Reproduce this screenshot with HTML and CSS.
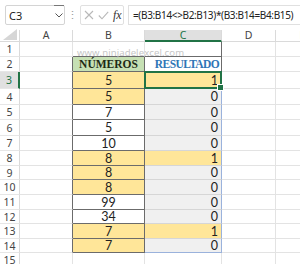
FILE: index.html
```html
<!DOCTYPE html>
<html>
<head>
<meta charset="utf-8">
<link rel="stylesheet" href="styles.css">
</head>
<body>
<div class="app">
  <div class="fbar">
    <div class="namebox"><span class="ref">C3</span><span class="dd"><svg width="8" height="5" viewBox="0 0 8 5"><path d="M0.5 0.5 L4 4 L7.5 0.5" fill="none" stroke="#555" stroke-width="1"/></svg></span></div>
    <div class="grip">⋮</div>
    <div class="fxbox">
      <svg width="10" height="10" viewBox="0 0 10 10"><path d="M1 1 L9 9 M9 1 L1 9" stroke="#b8b8b8" stroke-width="1.1" fill="none"/></svg>
      <svg width="11" height="9" viewBox="0 0 11 9"><path d="M0.8 4.5 L4 7.8 L10.2 0.8" stroke="#b8b8b8" stroke-width="1.1" fill="none"/></svg>
      <span class="fx">fx</span>
    </div>
    <div class="formula">=(B3:B14&lt;&gt;B2:B13)*(B3:B14=B4:B15)</div>
  </div>
  <div class="sheet">
    <div class="grid">
      <div class="corner"><svg width="14" height="11" viewBox="0 0 14 11"><path d="M14 0 L14 11 L0 11 Z" fill="#d6d6d6"/></svg></div>
      <div class="ch">A</div><div class="ch">B</div><div class="ch sel">C</div><div class="ch">D</div><div class="ch">E</div>

      <div class="rh">1</div><div class="c ab"></div><div class="c b1"></div><div class="c c1"></div><div class="c"></div><div class="c"></div>
      <div class="rh">2</div><div class="c a"></div><div class="c bn hd">NÚMEROS</div><div class="c cr hd">RESULTADO</div><div class="c"></div><div class="c"></div>
      <div class="rh sel">3</div><div class="c a"></div><div class="c bn y">5</div><div class="c cr y act">1</div><div class="c"></div><div class="c"></div>
      <div class="rh">4</div><div class="c a"></div><div class="c bn y">5</div><div class="c cr g">0</div><div class="c"></div><div class="c"></div>
      <div class="rh">5</div><div class="c a"></div><div class="c bn">7</div><div class="c cr g">0</div><div class="c"></div><div class="c"></div>
      <div class="rh">6</div><div class="c a"></div><div class="c bn">5</div><div class="c cr g">0</div><div class="c"></div><div class="c"></div>
      <div class="rh">7</div><div class="c a"></div><div class="c bn">10</div><div class="c cr g">0</div><div class="c"></div><div class="c"></div>
      <div class="rh">8</div><div class="c a"></div><div class="c bn y">8</div><div class="c cr y">1</div><div class="c"></div><div class="c"></div>
      <div class="rh">9</div><div class="c a"></div><div class="c bn y">8</div><div class="c cr g">0</div><div class="c"></div><div class="c"></div>
      <div class="rh">10</div><div class="c a"></div><div class="c bn y">8</div><div class="c cr g">0</div><div class="c"></div><div class="c"></div>
      <div class="rh">11</div><div class="c a"></div><div class="c bn">99</div><div class="c cr g">0</div><div class="c"></div><div class="c"></div>
      <div class="rh">12</div><div class="c a"></div><div class="c bn">34</div><div class="c cr g">0</div><div class="c"></div><div class="c"></div>
      <div class="rh">13</div><div class="c a"></div><div class="c bn y">7</div><div class="c cr y">1</div><div class="c"></div><div class="c"></div>
      <div class="rh">14</div><div class="c a"></div><div class="c bn y">7</div><div class="c cr g last">0</div><div class="c"></div><div class="c"></div>
      <div class="rh">15</div><div class="c"></div><div class="c"></div><div class="c"></div><div class="c"></div><div class="c"></div>
    </div>
    <div class="wm">www.ninjadelexcel.com</div>
  </div>
</div>
</body>
</html>
```
FILE: styles.css
```css
* { box-sizing: border-box; }
html, body { margin: 0; padding: 0; background: #fff; overflow: hidden; }
body { width: 300px; height: 264px; font-family: "Noto Sans", "Open Sans", sans-serif; }
.app { width: 300px; height: 264px; overflow: hidden; }

.fbar { height: 30px; display: flex; align-items: flex-start; padding: 5px 0 0 5px; white-space: nowrap; }
.namebox { flex: 0 0 60px; height: 20px; border: 1px solid #d4d4d4; border-radius: 2px; display: flex; align-items: center; justify-content: space-between; padding-left: 3px; }
.ref { font-size: 11px; color: #222; }
.dd { width: 10px; height: 19px; border-top: 1px solid #777; display: flex; align-items: center; justify-content: center; margin-top: -1px; }
.grip { flex: 0 0 15px; text-align: center; font-size: 11px; color: #999; line-height: 20px; }
.fxbox { flex: 0 0 44px; height: 20px; border: 1px solid #e0e0e0; border-radius: 2px; display: flex; align-items: center; gap: 4px; padding-left: 3px; }
.fx { font-family: "Liberation Serif", serif; font-style: italic; font-size: 12px; color: #333; }
.formula { margin-left: 4px; flex: 1 1 auto; min-width: 0; overflow: hidden; height: 20px; border: 1px solid #e0e0e0; border-right: none; padding-left: 4px; font-size: 10px; color: #222; line-height: 18px; letter-spacing: -0.35px; }

.sheet { position: relative; }
.grid { display: grid; grid-template-columns: 20px 53px 72px 77px 54px 54px; grid-template-rows: 12px 15px 15px 17px 16px 15px 16px 15px 15px 14px 15px 15px 14px 15px 14px 15px; }
.corner { display: flex; align-items: flex-end; justify-content: flex-end; padding: 0 2px 1px 0; border-right: 1px solid #dadada; border-bottom: 1px solid #dadada; }
.ch { font-size: 10.5px; color: #444; text-align: center; line-height: 11px; border-right: 1px solid #dadada; border-bottom: 1px solid #dadada; }
.ch.sel { background: #e0e0e0; color: #217346; border-bottom: 2px solid #217346; }
.rh { font-size: 10.5px; color: #444; text-align: center; display: flex; align-items: center; justify-content: center; border-right: 1px solid #dadada; border-bottom: 1px solid #e6e6e6; }
.rh.sel { background: #e0e0e0; color: #217346; border-right: 2px solid #217346; }

.c { border-right: 1px solid #e3e3e3; border-bottom: 1px solid #e3e3e3; font-family: Lato, "Liberation Sans", sans-serif; font-size: 12.5px; color: #222; display: flex; align-items: center; }
.c.a { border-right-color: #6b6b6b; }
.c.b1, .c.c1 { border-bottom-color: #6b6b6b; }
.c.c1 { border-right-color: #6b6b6b; }
.c.bn { justify-content: center; border-right: 1px solid #6b6b6b; border-bottom: 1px solid #6b6b6b; background: #fff; }
.c.cr { justify-content: flex-end; padding-right: 3px; border-right: 1px solid #9ab2dc; border-bottom: 1px solid #d6d6d6; }
.c.y { background: #ffe699; }
.c.g { background: #f0f0f0; }
.c.last { border-bottom-color: #9ab2dc; }
.c.hd { font-family: "Liberation Serif", serif; font-weight: bold; font-size: 11.5px; justify-content: center; padding: 0; }
.c.bn.hd { background: #c6e0b4; color: #1e2a14; }
.c.cr.hd { color: #2e75b6; border-right-color: #6b6b6b; border-bottom-color: #217346; letter-spacing: -0.6px; padding-left: 8px; }
.c.act { position: relative; border-right-color: transparent; }
.c.act::after { content: ""; position: absolute; left: -1px; top: -1px; right: -1px; bottom: -1px; border: 2px solid #217346; }
.c.act::before { content: ""; position: absolute; right: -3px; bottom: -3px; width: 5px; height: 5px; background: #217346; border: 1px solid #fff; z-index: 2; }

.wm { position: absolute; left: 77px; top: 16px; font-family: "Open Sans", sans-serif; font-size: 9.6px; color: #c4c4c4; letter-spacing: 0.1px; }
```
